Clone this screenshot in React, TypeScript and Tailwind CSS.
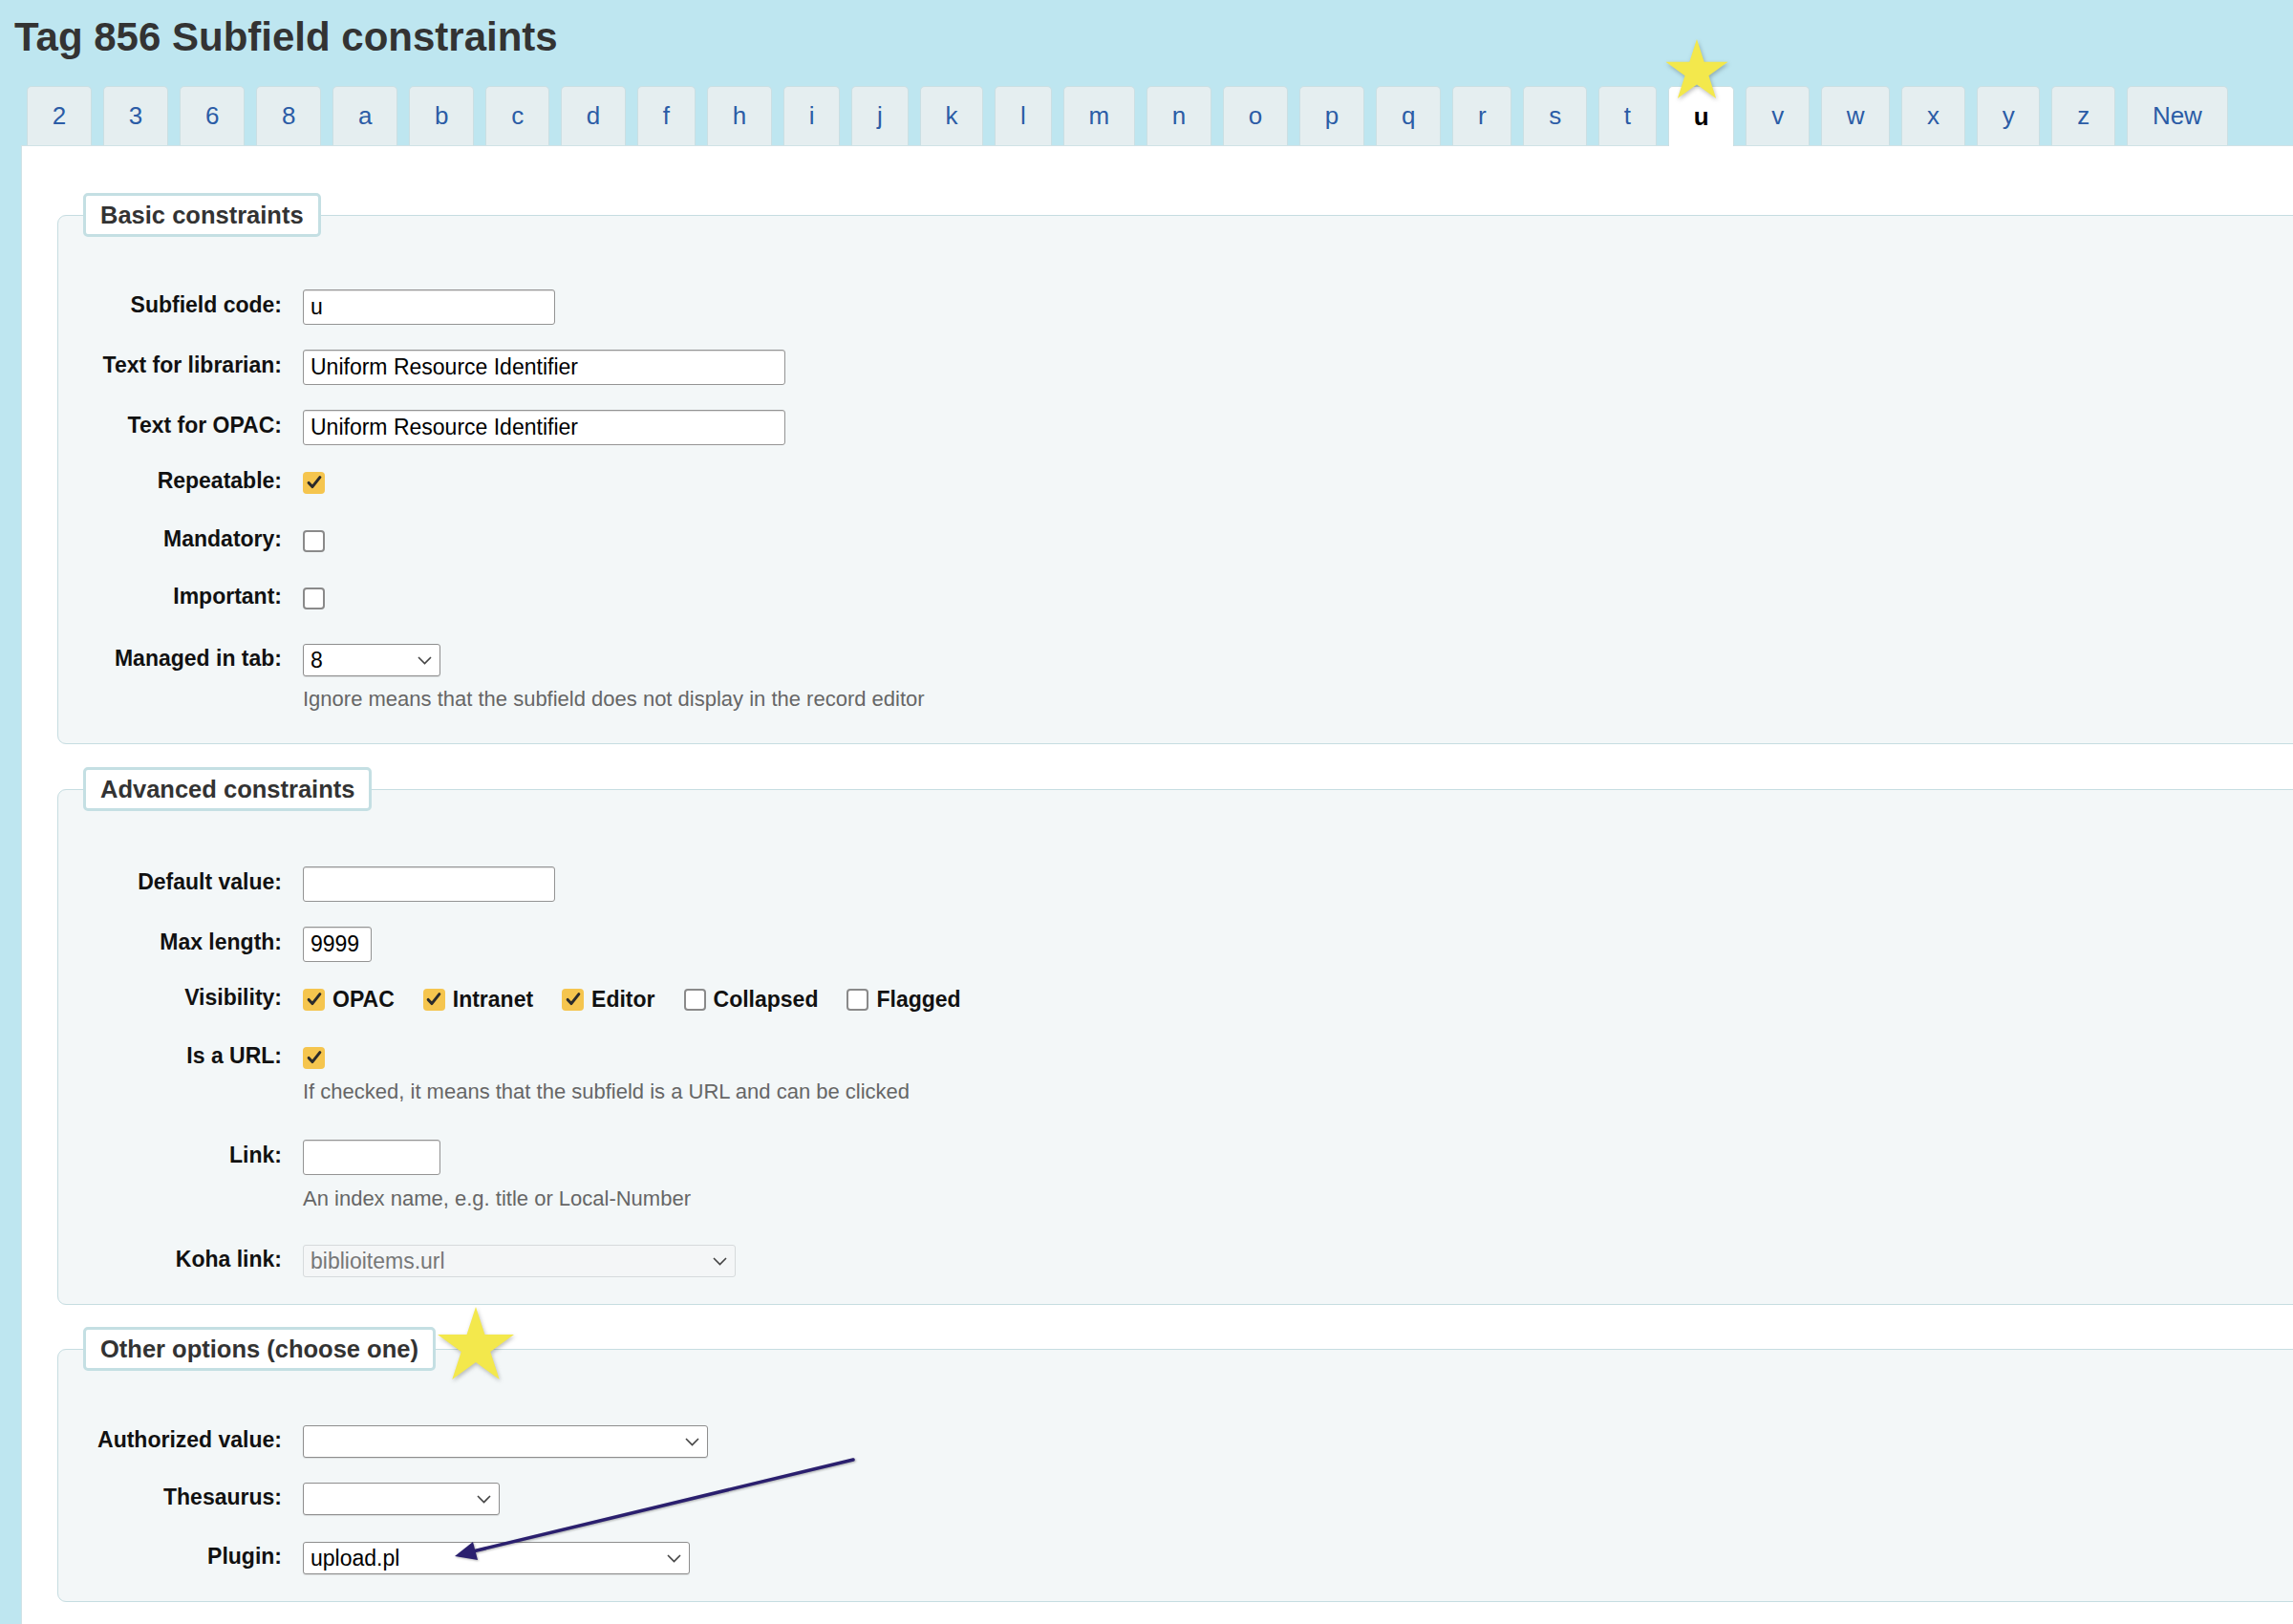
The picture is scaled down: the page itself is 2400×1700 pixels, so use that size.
import type { ReactNode } from 'react';

const tabs = ['2', '3', '6', '8', 'a', 'b', 'c', 'd', 'f', 'h', 'i', 'j', 'k', 'l', 'm', 'n', 'o', 'p', 'q', 'r', 's', 't', 'u', 'v', 'w', 'x', 'y', 'z', 'New'];

function Star({ className }: { className: string }) {
  return (
    <svg viewBox="0 0 100 95" className={className}>
      <polygon
        points="50,0 61.8,36.3 100,36.3 69.1,58.8 80.9,95 50,72.6 19.1,95 30.9,58.8 0,36.3 38.2,36.3"
        fill="#f3e84c"
      />
    </svg>
  );
}

function Row({ label, children, className = '' }: { label: string; children: ReactNode; className?: string }) {
  return (
    <div className={`flex items-center h-[38px] ${className}`}>
      <label className="w-[234px] shrink-0 text-right text-[23px] font-bold text-[#111] -mt-[4px]">{label}</label>
      <div className="ml-[22px] flex items-center">{children}</div>
    </div>
  );
}

function TextInput({ value = '', width }: { value?: string; width: string }) {
  return (
    <input
      readOnly
      value={value}
      className={`${width} h-[37px] px-[7px] bg-white border border-[#949494] rounded-[3px] shadow-[inset_0_1px_1px_rgba(0,0,0,0.12)] text-[23px] text-black outline-none`}
    />
  );
}

function Chevron() {
  return (
    <svg width="15" height="9" viewBox="0 0 15 9" className="shrink-0">
      <polyline points="1,1 7.5,7.5 14,1" fill="none" stroke="#444" strokeWidth="1.6" />
    </svg>
  );
}

function Select({ value = '', width, disabled = false }: { value?: string; width: string; disabled?: boolean }) {
  return (
    <div
      className={`${width} h-[34px] flex items-center justify-between pl-[7px] pr-[8px] rounded-[3px] border text-[23px] ${
        disabled ? 'bg-[#f4f6f7] border-[#d6dadc] text-[#777]' : 'bg-white border-[#8e8e8e] text-black shadow-[0_1px_1px_rgba(0,0,0,0.1)]'
      }`}
    >
      <span>{value}</span>
      <Chevron />
    </div>
  );
}

function Checkbox({ checked = false }: { checked?: boolean }) {
  if (checked) {
    return (
      <span className="w-[23px] h-[23px] rounded-[4px] bg-[#f5c54e] flex items-center justify-center shrink-0">
        <svg width="20" height="20" viewBox="0 0 24 24">
          <path d="M5 12.5l4.5 5L19 5.5" fill="none" stroke="#2b2b2b" strokeWidth="3.6" strokeLinecap="round" strokeLinejoin="round" />
        </svg>
      </span>
    );
  }
  return <span className="w-[23px] h-[23px] rounded-[4px] bg-white border-2 border-[#8a8a8a] shrink-0" />;
}

function Hint({ children, className = '' }: { children: ReactNode; className?: string }) {
  return <p className={`ml-[256px] text-[22px] leading-[26px] text-[#666] ${className}`}>{children}</p>;
}

function Fieldset({ title, children, className = '', legendExtra }: { title: string; children: ReactNode; className?: string; legendExtra?: ReactNode }) {
  return (
    <fieldset className={`relative -mr-10 border border-[#c6dde1] rounded-[9px] bg-[#f3f7f8] ${className}`}>
      <legend className="relative ml-[26px] px-[15px] py-[6px] bg-white border-[3px] border-[#c4dfe3] rounded-[5px] text-[25.5px] leading-[28px] font-bold text-[#333]">
        {title}
        {legendExtra}
      </legend>
      {children}
    </fieldset>
  );
}

export default function App() {
  return (
    <div className="h-[1700px] flex flex-col overflow-hidden bg-[#bee6f0] font-['Liberation_Sans',Arial,sans-serif]">
      <h1 className="pl-[15px] pt-[14px] text-[42px] leading-[50px] font-bold text-[#333]">Tag 856 Subfield constraints</h1>

      <div className="flex-1 flex flex-col ml-[22px] mt-[26px]">
        <ul className="flex items-end gap-3 pl-[6px]">
          {tabs.map((t) =>
            t === 'u' ? (
              <li
                key={t}
                className="relative z-10 -mb-px h-[63px] px-[25.8px] flex items-center rounded-t-[5px] border border-b-0 border-[#cadfe3] bg-white text-[26px] font-bold text-black"
              >
                <Star className="absolute left-[-4px] top-[-50px] w-[66px] h-[62px] drop-shadow-[1px_2px_2px_rgba(0,0,0,0.25)]" />
                {t}
              </li>
            ) : (
              <li
                key={t}
                className="h-[62px] px-[25.8px] flex items-center rounded-t-[5px] border border-b-0 border-[#cadfe3] bg-[#e5eef0] text-[26px] text-[#2b5ca6]"
              >
                {t}
              </li>
            )
          )}
        </ul>

        <div className="flex-1 bg-white border-l border-t border-[#d0e2e6] pl-[37px] pt-[49px]">
          <Fieldset title="Basic constraints" className="pb-[33px]">
            <div className="pt-[54px]">
              <Row label="Subfield code:">
                <TextInput value="u" width="w-[264px]" />
              </Row>
              <Row label="Text for librarian:" className="mt-[25px]">
                <TextInput value="Uniform Resource Identifier" width="w-[505px]" />
              </Row>
              <Row label="Text for OPAC:" className="mt-[25px]">
                <TextInput value="Uniform Resource Identifier" width="w-[505px]" />
              </Row>
              <Row label="Repeatable:" className="mt-[20px]">
                <Checkbox checked />
              </Row>
              <Row label="Mandatory:" className="mt-[23px]">
                <Checkbox />
              </Row>
              <Row label="Important:" className="mt-[22px]">
                <Checkbox />
              </Row>
              <Row label="Managed in tab:" className="mt-[27px]">
                <Select value="8" width="w-[144px]" />
              </Row>
              <Hint className="mt-[9px]">Ignore means that the subfield does not display in the record editor</Hint>
            </div>
          </Fieldset>

          <Fieldset title="Advanced constraints" className="mt-[24px] pb-[26px]">
            <div className="pt-[57px]">
              <Row label="Default value:">
                <TextInput width="w-[264px]" />
              </Row>
              <Row label="Max length:" className="mt-[25px]">
                <TextInput value="9999" width="w-[72px]" />
              </Row>
              <Row label="Visibility:" className="mt-[20px]">
                <div className="flex items-center text-[23px] font-bold text-[#111]">
                  {[
                    ['OPAC', true],
                    ['Intranet', true],
                    ['Editor', true],
                    ['Collapsed', false],
                    ['Flagged', false],
                  ].map(([name, on], i) => (
                    <span key={name as string} className={`flex items-center gap-[8px] ${i > 0 ? 'ml-[30px]' : ''}`}>
                      <Checkbox checked={on as boolean} />
                      <span>{name as string}</span>
                    </span>
                  ))}
                </div>
              </Row>
              <Row label="Is a URL:" className="mt-[23px]">
                <Checkbox checked />
              </Row>
              <Hint className="mt-[4px]">If checked, it means that the subfield is a URL and can be clicked</Hint>
              <Row label="Link:" className="mt-[36px]">
                <TextInput width="w-[144px]" />
              </Row>
              <Hint className="mt-[12px]">An index name, e.g. title or Local-Number</Hint>
              <Row label="Koha link:" className="mt-[33px]">
                <Select value="biblioitems.url" width="w-[453px]" disabled />
              </Row>
            </div>
          </Fieldset>

          <Fieldset
            title="Other options (choose one)"
            className="mt-[23px] pb-[26px]"
            legendExtra={
              <Star className="absolute left-[calc(100%+5px)] top-[-24px] w-[80px] h-[76px] drop-shadow-[1px_2px_2px_rgba(0,0,0,0.25)]" />
            }
          >
            <div className="pt-[55px]">
              <Row label="Authorized value:">
                <Select width="w-[424px]" />
              </Row>
              <Row label="Thesaurus:" className="mt-[22px]">
                <Select width="w-[206px]" />
              </Row>
              <Row label="Plugin:" className="relative mt-[24px]">
                <Select value="upload.pl" width="w-[405px]" />
                <svg
                  width="450"
                  height="130"
                  viewBox="0 0 450 130"
                  className="absolute left-[400px] top-[-100px] drop-shadow-[1px_1px_1px_rgba(0,0,0,0.3)]"
                >
                  <line x1="432" y1="16" x2="34" y2="112" stroke="#2a1f6e" strokeWidth="3.5" strokeLinecap="round" />
                  <polygon points="15,117 39,121 34,102" fill="#2a1f6e" />
                </svg>
              </Row>
            </div>
          </Fieldset>
        </div>
      </div>
    </div>
  );
}
